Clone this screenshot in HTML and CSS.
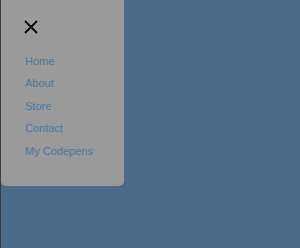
FILE: index.html
```html
<!DOCTYPE html>
<html lang="en">
<head>
    <meta charset="UTF-8">
    <meta name="viewport" content="width=device-width, initial-scale=1.0">
    <title>Menu</title>
    <link rel="stylesheet" href="styles.css">
</head>
<body>
    <div class="page">
        <div class="sidenav">
            <a href="#" class="close-btn">
                <svg width="14" height="14" viewBox="0 0 14 14"><path d="M1 1L13 13M13 1L1 13" stroke="#000" stroke-width="1.8"/></svg>
            </a>
            <a href="#">Home</a>
            <a href="#">About</a>
            <a href="#">Store</a>
            <a href="#">Contact</a>
            <a href="#">My Codepens</a>
        </div>
    </div>
</body>
</html>
```

FILE: styles.css
```css
body {
    font-family: "Liberation Sans", Arial, sans-serif;
    margin: 0;
    padding: 0;
    background-color: #3c3c3c;
}
.page {
    margin-left: 1px;
    height: 248px;
    background-color: #4a6b8a;
}
.sidenav {
    width: 123px;
    height: 186px;
    background-color: #9a9a9a;
    border-radius: 0 0 5px 5px;
    box-sizing: border-box;
    padding: 20px 0 0 23px;
    display: flex;
    flex-direction: column;
}
.sidenav a {
    font-size: 11px;
    color: #4a78a0;
    text-decoration: none;
    line-height: 14px;
    margin-bottom: 8.4px;
    padding-left: 1px;
}
.sidenav .close-btn {
    margin: 0 0 20px 0;
    height: 14px;
    padding-left: 0;
}
.close-btn svg {
    display: block;
}
```
